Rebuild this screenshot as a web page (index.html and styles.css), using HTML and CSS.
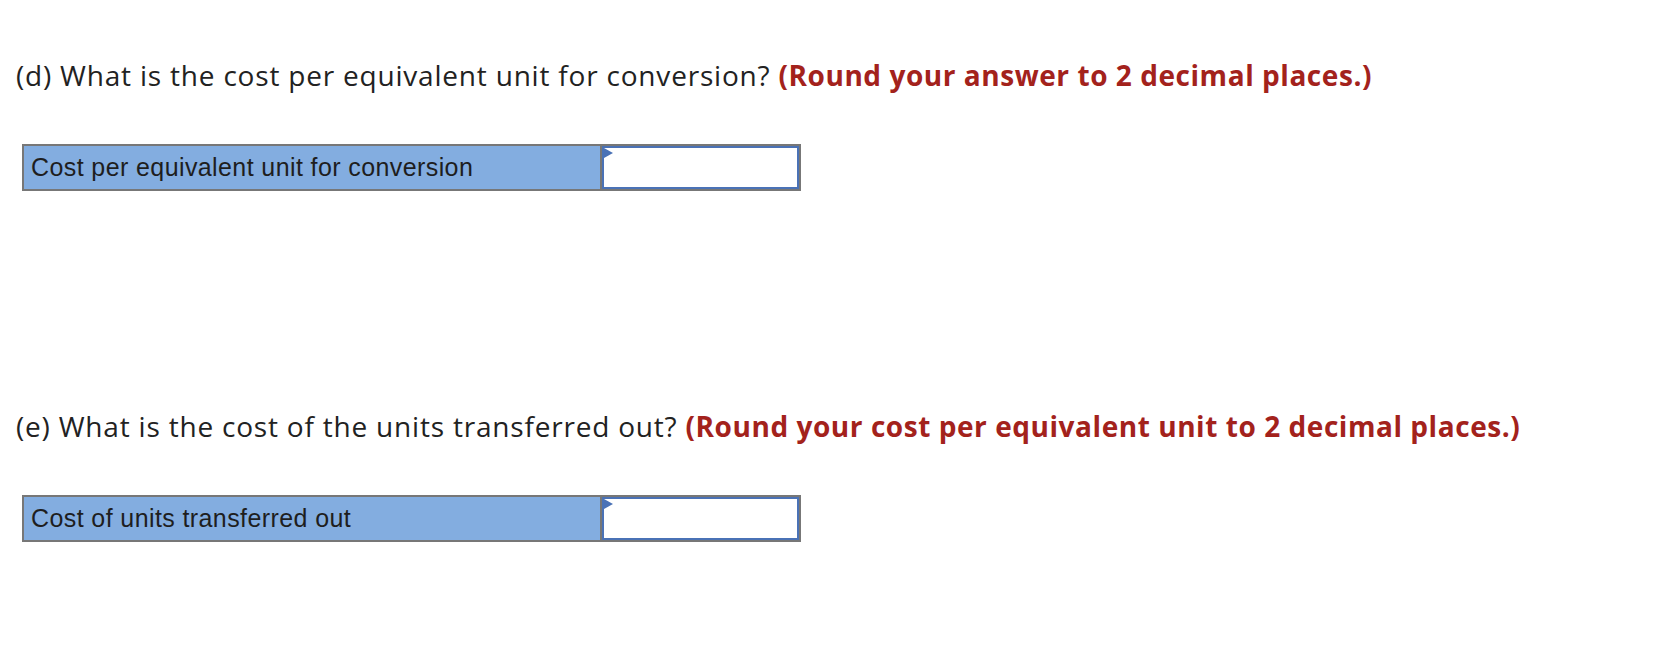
FILE: index.html
```html
<!DOCTYPE html>
<html>
<head>
<meta charset="utf-8">
<link rel="stylesheet" href="styles.css">
</head>
<body>
<div class="page">
  <section class="part">
    <p class="question">(d) What is the cost per equivalent unit for conversion? <strong class="hint">(Round your answer to 2 decimal places.)</strong></p>
    <div class="answer-table">
      <div class="label">Cost per equivalent unit for conversion</div>
      <div class="input"><span class="marker"></span></div>
    </div>
  </section>
  <section class="part part-e">
    <p class="question">(e) What is the cost of the units transferred out? <strong class="hint">(Round your cost per equivalent unit to 2 decimal places.)</strong></p>
    <div class="answer-table">
      <div class="label">Cost of units transferred out</div>
      <div class="input"><span class="marker"></span></div>
    </div>
  </section>
</div>
</body>
</html>
```

FILE: styles.css
```css
html, body {
  margin: 0;
  padding: 0;
  background: #ffffff;
}

.page {
  padding: 60px 0 0 16px;
}

.part {
  margin: 0;
}

.part-e {
  margin-top: 220px;
}

.question {
  margin: 0;
  font-family: "Open Sans", Lato, "Liberation Sans", sans-serif;
  font-size: 28px;
  line-height: 30px;
  letter-spacing: 0.8px;
  color: #222222;
  white-space: nowrap;
}

.hint {
  color: #a3221c;
  font-weight: 700;
  letter-spacing: 0.55px;
}

.answer-table {
  display: flex;
  width: 775px;
  height: 43px;
  margin: 54px 0 0 6px;
  border: 2px solid #777777;
}

.label {
  width: 578px;
  box-sizing: border-box;
  padding-left: 7px;
  background: #83ade0;
  border-right: 2px solid #777777;
  font-family: "Liberation Sans", Arial, sans-serif;
  font-size: 25px;
  line-height: 43px;
  letter-spacing: 0.4px;
  color: #1e1e1e;
}

.input {
  position: relative;
  flex: 1;
  border: 2px solid #4a72b6;
  background: #ffffff;
}

.marker {
  position: absolute;
  left: 0;
  top: 0;
  width: 0;
  height: 0;
  border-top: 5px solid transparent;
  border-bottom: 5px solid transparent;
  border-left: 9px solid #4a72b6;
}
```
